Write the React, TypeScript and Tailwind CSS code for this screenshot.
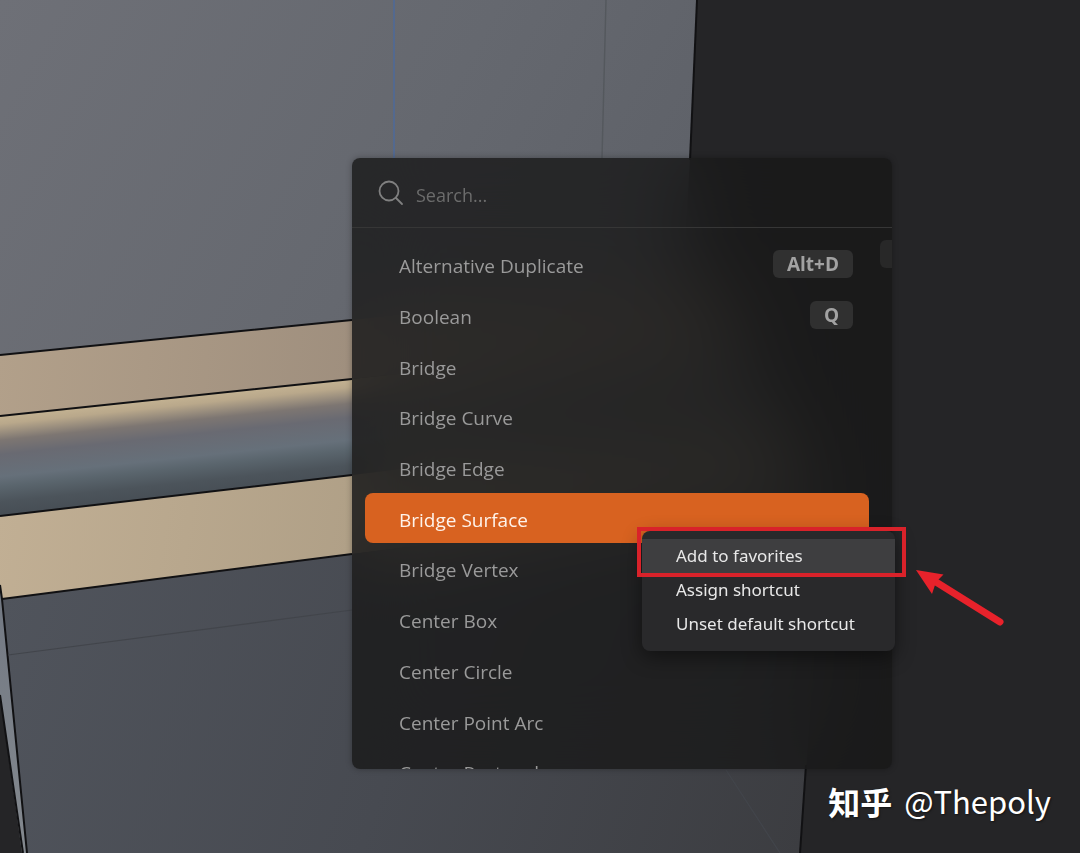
import React from "react";

type Command = { name: string; shortcut?: string; selected?: boolean };

const commands: Command[] = [
  { name: "Alternative Duplicate", shortcut: "Alt+D" },
  { name: "Boolean", shortcut: "Q" },
  { name: "Bridge" },
  { name: "Bridge Curve" },
  { name: "Bridge Edge" },
  { name: "Bridge Surface", selected: true },
  { name: "Bridge Vertex" },
  { name: "Center Box" },
  { name: "Center Circle" },
  { name: "Center Point Arc" },
  { name: "Center Rectangle" },
];

const menuItems = ["Add to favorites", "Assign shortcut", "Unset default shortcut"];

function Viewport() {
  return (
    <svg
      className="absolute inset-0 h-full w-full"
      viewBox="0 0 1080 853"
      preserveAspectRatio="xMinYMin slice"
      aria-hidden="true"
    >
      <defs>
        <linearGradient id="wall" x1="0" y1="0" x2="700" y2="380" gradientUnits="userSpaceOnUse">
          <stop offset="0" stopColor="#6e7077" />
          <stop offset="0.55" stopColor="#65686f" />
          <stop offset="1" stopColor="#5c5f66" />
        </linearGradient>
        <linearGradient id="bandTop" x1="0" y1="340" x2="352" y2="375" gradientUnits="userSpaceOnUse">
          <stop offset="0" stopColor="#b2a08a" />
          <stop offset="1" stopColor="#9f8f7e" />
        </linearGradient>
        <linearGradient id="bandBottom" x1="0" y1="500" x2="352" y2="550" gradientUnits="userSpaceOnUse">
          <stop offset="0" stopColor="#c1af94" />
          <stop offset="1" stopColor="#b0a087" />
        </linearGradient>
        <linearGradient id="tube" x1="0" y1="416" x2="10.5" y2="516" gradientUnits="userSpaceOnUse">
          <stop offset="0" stopColor="#c3b292" />
          <stop offset="0.08" stopColor="#b9a88b" />
          <stop offset="0.24" stopColor="#7d7672" />
          <stop offset="0.38" stopColor="#696a72" />
          <stop offset="0.6" stopColor="#66707a" />
          <stop offset="0.7" stopColor="#5a656d" />
          <stop offset="0.85" stopColor="#4c545b" />
          <stop offset="1" stopColor="#464d54" />
        </linearGradient>
        <linearGradient id="shade" x1="352" y1="0" x2="830" y2="0" gradientUnits="userSpaceOnUse">
          <stop offset="0" stopColor="#252527" stopOpacity="0.15" />
          <stop offset="1" stopColor="#252527" stopOpacity="0.45" />
        </linearGradient>
        <linearGradient id="base" x1="0" y1="600" x2="800" y2="853" gradientUnits="userSpaceOnUse">
          <stop offset="0" stopColor="#50545c" />
          <stop offset="0.5" stopColor="#474a51" />
          <stop offset="1" stopColor="#3c3d41" />
        </linearGradient>
        <linearGradient id="sliver" x1="0" y1="600" x2="0" y2="853" gradientUnits="userSpaceOnUse">
          <stop offset="0" stopColor="#737983" />
          <stop offset="1" stopColor="#84898f" />
        </linearGradient>
      </defs>
      <rect width="1080" height="853" fill="#252527" />
      <path d="M0 0H697L690 158L682 300L0 355Z" fill="url(#wall)" />
      <path d="M0 355L352 320L720 281L740 337L352 379L0 416Z" fill="url(#bandTop)" />
      <path d="M0 416L352 379L740 337L780 422L352 475L0 516Z" fill="url(#tube)" />
      <path d="M0 516L352 475L780 422L810 495L352 554L2 599L0 585Z" fill="url(#bandBottom)" />
      <path d="M352 320L720 281L810 495L352 554Z" fill="url(#shade)" />
      <path d="M2 599L352 554L826 495L800 853H27Z" fill="url(#base)" />
      <path d="M0 590L2 599L27 853H22L0 695Z" fill="url(#sliver)" />
      <g fill="none" stroke="#111113" strokeWidth="2">
        <path d="M697 0L690 160" />
        <path d="M0 355L352 320M0 416L352 379M0 516L352 475M2 599L352 554" />
        <path d="M0 585L2 599L27 853M0 695L23 853" />
        <path d="M806 765L800 853" />
      </g>
      <path d="M394 0V158" stroke="#53698f" strokeWidth="2" />
      <path d="M606 0L602 158" stroke="#54585d" strokeWidth="1.4" />
      <path d="M8 655L352 610M726 770L780 853" stroke="#42454b" strokeWidth="1.2" />
    </svg>
  );
}

function CommandRow({ name, shortcut, selected }: Command) {
  return (
    <li className="flex">
      <button
        type="button"
        className={
          selected
            ? "flex flex-1 items-center justify-between rounded-lg bg-[#d86220] pr-4 pl-[34px] text-left text-[#fff3ea]"
            : "flex flex-1 items-center justify-between rounded-lg pr-4 pl-[34px] text-left text-[#9a9a9a]"
        }
      >
        <span className="pt-1">{name}</span>
        {shortcut && (
          <kbd className="flex h-7 items-center rounded-md bg-[#303030] px-3.5 font-[inherit] font-bold text-[#a2a2a2]">
            {shortcut}
          </kbd>
        )}
      </button>
    </li>
  );
}

function ContextMenu() {
  return (
    <div className="absolute top-[373px] left-[290px] w-[253px] rounded-lg bg-[#29292b] pt-2 pb-2.5 shadow-[0_6px_20px_rgba(0,0,0,0.45)]">
      <ul role="menu" className="text-[17px] leading-[34px] text-[#e8e8e8] [font-family:'Noto_Sans',sans-serif]">
        {menuItems.map((item, index) => (
          <li key={item} role="none">
            <button
              type="button"
              role="menuitem"
              className={index === 0 ? "w-full bg-[#3e3e40] pl-[34px] text-left" : "w-full pl-[34px] text-left"}
            >
              {item}
            </button>
          </li>
        ))}
      </ul>
      <div className="pointer-events-none absolute -top-1 -left-[5px] h-[50px] w-[269px] border-4 border-[#d9222a]" />
      <svg
        className="pointer-events-none absolute top-9 left-[270px]"
        width="96"
        height="64"
        viewBox="912 567 96 64"
        aria-hidden="true"
      >
        <path d="M936 582L1000 622" stroke="#e8222b" strokeWidth="7" strokeLinecap="round" />
        <path d="M916 570L943.5 574.5L936 582L932 594Z" fill="#e8222b" />
      </svg>
    </div>
  );
}

export default function App() {
  return (
    <main className="relative flex min-h-screen flex-col overflow-hidden bg-[#252527] pt-[158px] pl-[352px] [font-family:'Open_Sans','Noto_Sans','Noto_Sans_CJK_SC',sans-serif]">
      <Viewport />
      <div className="relative w-[540px]">
        <section
          aria-label="Commands"
          className="overflow-hidden rounded-lg bg-[#181818]/80 shadow-[0_0_6px_rgba(0,0,0,0.3)] backdrop-blur-2xl"
        >
          <label className="flex h-[70px] items-center gap-3 border-b border-[#363636] pl-[26px]">
            <svg width="26" height="26" viewBox="0 0 26 26" fill="none" stroke="#808080" strokeWidth="1.8" strokeLinecap="round" aria-hidden="true">
              <circle cx="11" cy="11" r="9.5" />
              <path d="M18 18L24 24" />
            </svg>
            <input
              type="text"
              placeholder="Search..."
              aria-label="Search"
              className="min-w-0 flex-1 bg-transparent pt-1 text-lg text-[#9a9a9a] outline-none placeholder:text-[#6c6c6c]"
            />
          </label>
          <div className="relative h-[541px] overflow-hidden pt-[11px] pr-[23px] pl-[13px]">
            <ul className="grid h-[558px] auto-rows-fr text-[19px]">
              {commands.map((command) => (
                <CommandRow key={command.name} {...command} />
              ))}
            </ul>
            <div className="absolute top-3 right-0 h-7 w-3 rounded-l-md bg-[#282828]" />
          </div>
        </section>
        <ContextMenu />
      </div>
      <p className="absolute right-[29px] bottom-[29px] flex items-center gap-3 leading-[46px] text-white [font-family:'Noto_Sans_CJK_SC',sans-serif] [text-shadow:1px_1px_2px_rgba(0,0,0,0.5)]">
        <span className="text-[32px] font-bold">知乎</span>
        <span className="text-[31px]">@Thepoly</span>
      </p>
    </main>
  );
}
